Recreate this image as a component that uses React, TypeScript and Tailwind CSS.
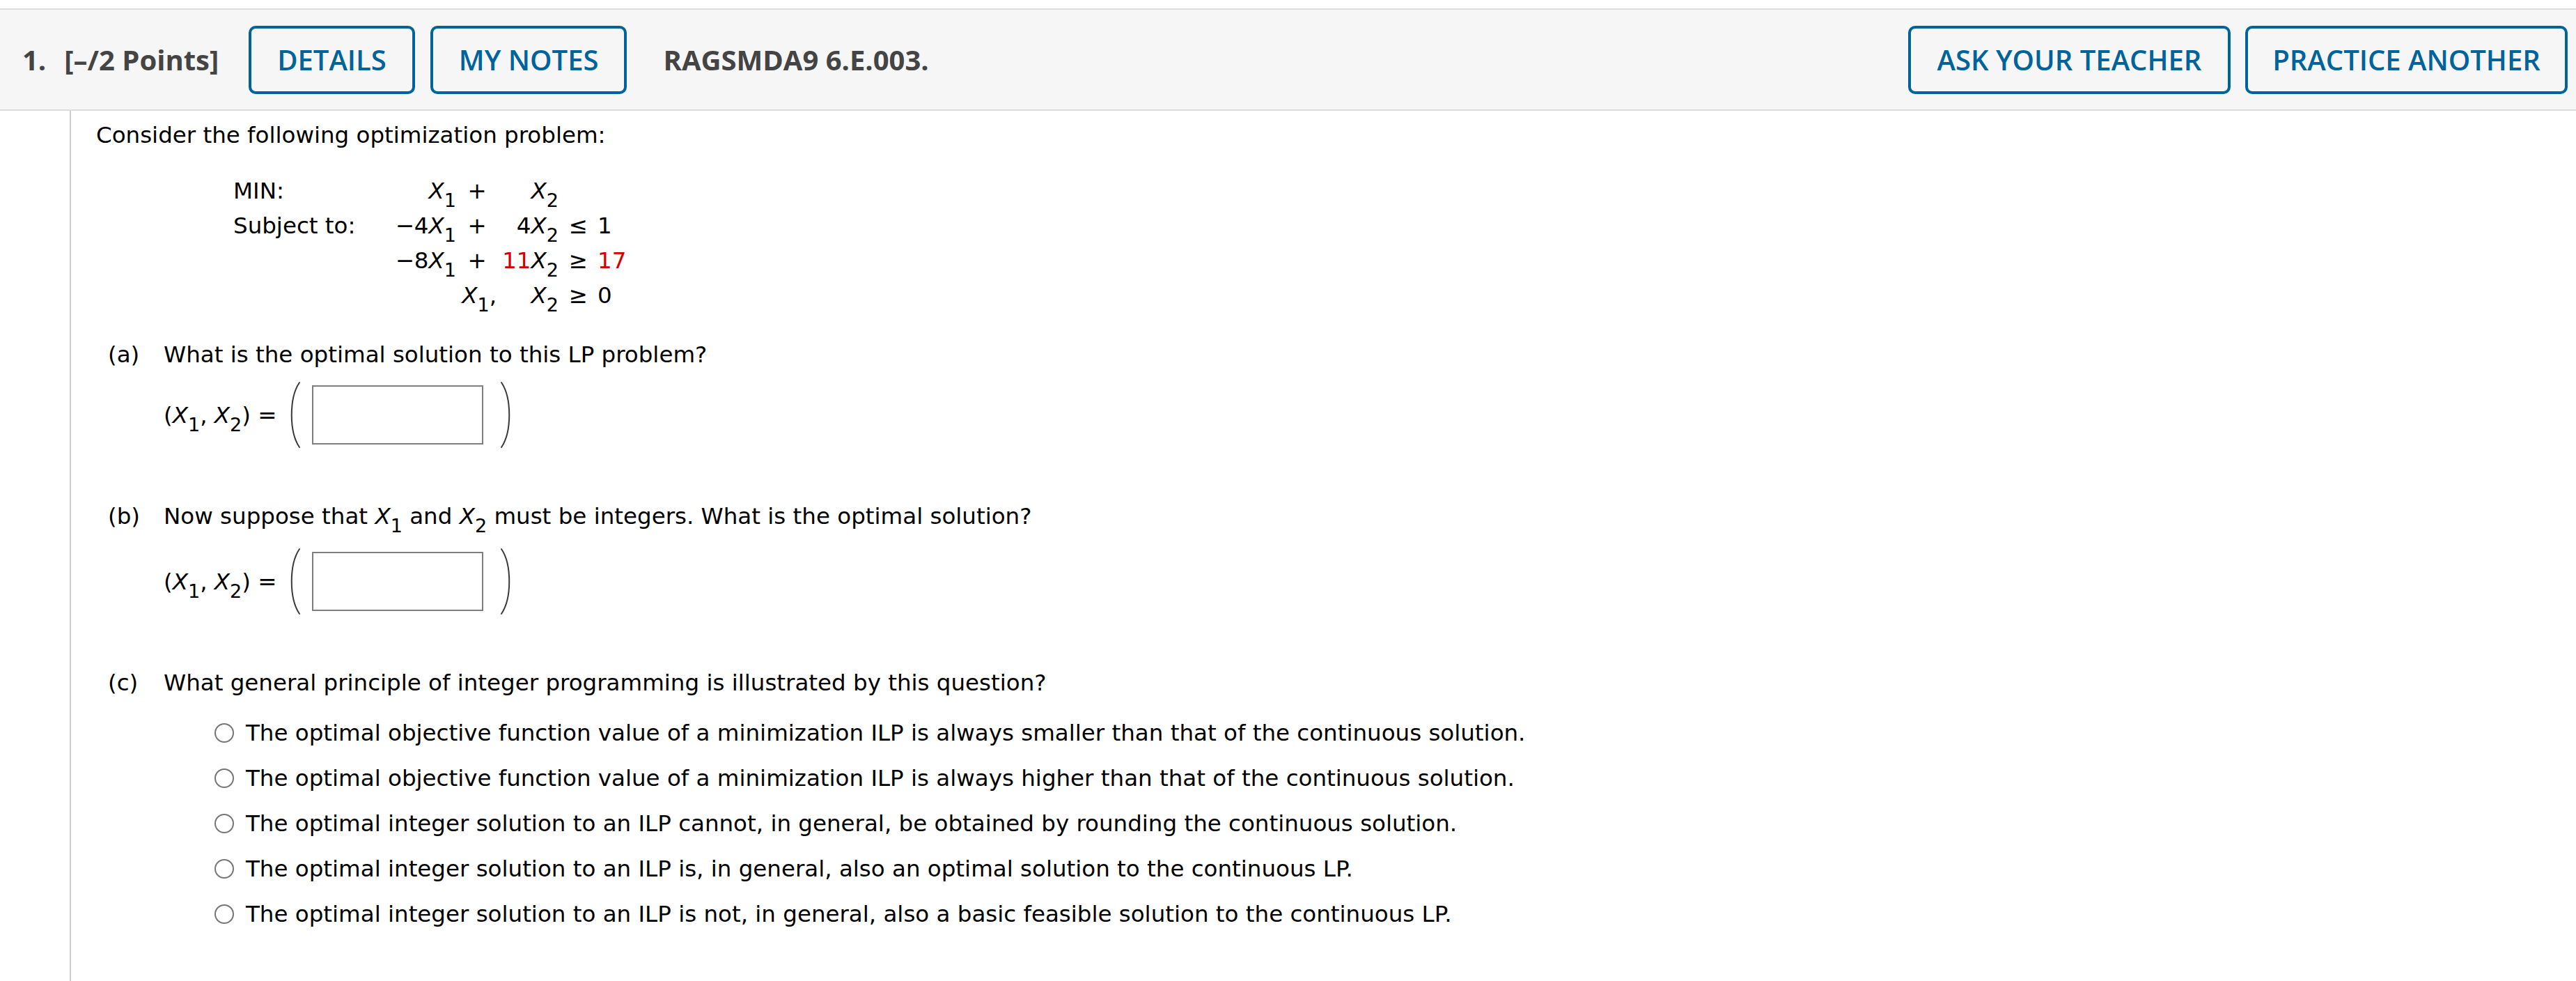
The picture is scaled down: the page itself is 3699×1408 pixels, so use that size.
import type { ReactNode } from "react";

function Sub({ children }: { children: ReactNode }) {
  return <sub className="top-[12px] text-[27px] not-italic">{children}</sub>;
}

function X({ n }: { n: string }) {
  return (
    <>
      <i className="italic">X</i>
      <Sub>{n}</Sub>
    </>
  );
}

function HeaderButton({ label, wide }: { label: string; wide?: boolean }) {
  return (
    <button
      className={
        wide
          ? "flex h-[98px] w-[463px] items-center justify-center rounded-[10px] border-[4px] border-[#00649a] text-[40px] font-semibold text-[#00649a]"
          : "flex h-[98px] items-center rounded-[10px] border-[4px] border-[#00649a] px-[37px] text-[40px] font-semibold text-[#00649a]"
      }
    >
      {label}
    </button>
  );
}

function Paren({ right }: { right?: boolean }) {
  return (
    <svg width="24" height="97" viewBox="0 0 24 97" className="shrink-0">
      <path
        d={right ? "M4 2 C 19 24, 19 73, 4 95" : "M20 2 C 5 24, 5 73, 20 95"}
        stroke="#3a3a3a"
        strokeWidth="2"
        fill="none"
        strokeLinecap="round"
      />
    </svg>
  );
}

function AnswerRow() {
  return (
    <div className="flex h-[95px] items-center pl-[97px]">
      <span className="leading-[40px]">
        (<X n="1" />, <X n="2" />) =
      </span>
      <div className="ml-[12px]">
        <Paren />
      </div>
      <div className="ml-[14px] h-[85px] w-[246px] border-2 border-[#7f7f7f] bg-white" />
      <div className="ml-[22px]">
        <Paren right />
      </div>
    </div>
  );
}

const choices = [
  "The optimal objective function value of a minimization ILP is always smaller than that of the continuous solution.",
  "The optimal objective function value of a minimization ILP is always higher than that of the continuous solution.",
  "The optimal integer solution to an ILP cannot, in general, be obtained by rounding the continuous solution.",
  "The optimal integer solution to an ILP is, in general, also an optimal solution to the continuous LP.",
  "The optimal integer solution to an ILP is not, in general, also a basic feasible solution to the continuous LP.",
];

export default function App() {
  return (
    <div className="flex min-h-[1408px] flex-col bg-white pt-[12px]">
      {/* question header */}
      <div className="flex h-[147px] items-center border-y-2 border-[#dcdcdc] bg-[#f6f6f6] pl-[32px] pr-[12px] font-['Open_Sans',sans-serif] text-[#444]">
        <span className="text-[40px] font-bold">1.</span>
        <span className="ml-[26px] text-[40px] font-bold">[–/2 Points]</span>
        <div className="ml-[43px] flex gap-[22px]">
          <HeaderButton label="DETAILS" />
          <HeaderButton label="MY NOTES" />
        </div>
        <span className="ml-[52px] text-[40px] font-bold">RAGSMDA9 6.E.003.</span>
        <div className="ml-auto flex gap-[21px]">
          <HeaderButton label="ASK YOUR TEACHER" wide />
          <HeaderButton label="PRACTICE ANOTHER" wide />
        </div>
      </div>

      {/* question body */}
      <div className="ml-[100px] flex-1 border-l-2 border-[#cccccc] pl-[36px] font-['DejaVu_Sans',Verdana,sans-serif] text-[32.5px] text-black">
        <p className="mt-[15px] leading-[40px]">Consider the following optimization problem:</p>

        <div className="mt-[35px] grid grid-cols-[231px_89px_60px_87px_56px_auto] pl-[197px] leading-[50px]">
          <span>MIN:</span>
          <span className="text-right">
            <X n="1" />
          </span>
          <span className="text-center">+</span>
          <span className="text-right">
            <X n="2" />
          </span>
          <span />
          <span />

          <span>Subject to:</span>
          <span className="text-right">
            −4<X n="1" />
          </span>
          <span className="text-center">+</span>
          <span className="text-right">
            4<X n="2" />
          </span>
          <span className="text-center">≤</span>
          <span>1</span>

          <span />
          <span className="text-right">
            −8<X n="1" />
          </span>
          <span className="text-center">+</span>
          <span className="text-right">
            <span className="text-[#d40000]">11</span>
            <X n="2" />
          </span>
          <span className="text-center">≥</span>
          <span className="text-[#d40000]">17</span>

          <span />
          <span className="col-span-2 pr-[2px] text-right">
            <X n="1" />,
          </span>
          <span className="text-right">
            <X n="2" />
          </span>
          <span className="text-center">≥</span>
          <span>0</span>
        </div>

        <p className="mt-[40px] flex leading-[40px]">
          <span className="w-[97px] pl-[17px]">(a)</span>
          <span>What is the optimal solution to this LP problem?</span>
        </p>
        <div className="mt-[19px]">
          <AnswerRow />
        </div>

        <p className="mt-[78px] flex leading-[40px]">
          <span className="w-[97px] pl-[17px]">(b)</span>
          <span>
            Now suppose that <X n="1" /> and <X n="2" /> must be integers. What is the optimal
            solution?
          </span>
        </p>
        <div className="mt-[26px]">
          <AnswerRow />
        </div>

        <p className="mt-[78px] flex leading-[40px]">
          <span className="w-[97px] pl-[17px]">(c)</span>
          <span>What general principle of integer programming is illustrated by this question?</span>
        </p>

        <div className="mt-[19px] pl-[170px]">
          {choices.map((c) => (
            <label key={c} className="flex h-[65px] items-center">
              <span className="h-[28px] w-[28px] shrink-0 rounded-full border-2 border-[#767676] bg-white" />
              <span className="ml-[17px] leading-[40px]">{c}</span>
            </label>
          ))}
        </div>
      </div>
    </div>
  );
}
